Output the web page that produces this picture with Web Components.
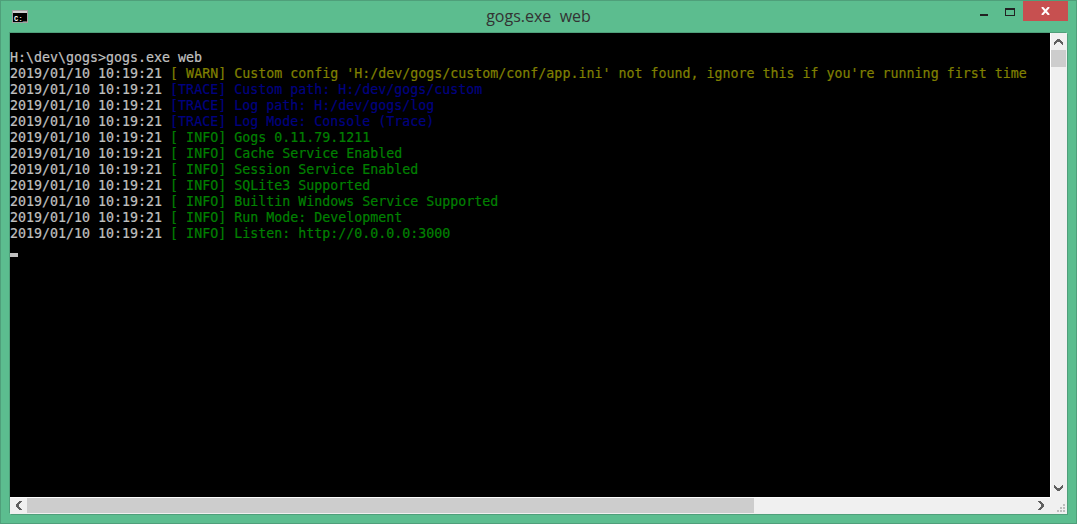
<!DOCTYPE html>
<html><head><meta charset="utf-8">
<style>html,body{margin:0;padding:0;background:#5cbd8f;overflow:hidden}</style></head>
<body>
<console-window title="gogs.exe  web">
<log-line raw>H:\dev\gogs&gt;gogs.exe web</log-line>
<log-line level="warn" tag="[ WARN]">Custom config 'H:/dev/gogs/custom/conf/app.ini' not found, ignore this if you're running first time</log-line>
<log-line level="trace" tag="[TRACE]">Custom path: H:/dev/gogs/custom</log-line>
<log-line level="trace" tag="[TRACE]">Log path: H:/dev/gogs/log</log-line>
<log-line level="trace" tag="[TRACE]">Log Mode: Console (Trace)</log-line>
<log-line level="info" tag="[ INFO]">Gogs 0.11.79.1211</log-line>
<log-line level="info" tag="[ INFO]">Cache Service Enabled</log-line>
<log-line level="info" tag="[ INFO]">Session Service Enabled</log-line>
<log-line level="info" tag="[ INFO]">SQLite3 Supported</log-line>
<log-line level="info" tag="[ INFO]">Builtin Windows Service Supported</log-line>
<log-line level="info" tag="[ INFO]">Run Mode: Development</log-line>
<log-line level="info" tag="[ INFO]">Listen: http://0.0.0.0:3000</log-line>
</console-window>
<script>
class LogLine extends HTMLElement{
  connectedCallback(){
    const s=this.attachShadow({mode:'open'});
    const c={warn:'#808000',trace:'#000080',info:'#008000'}[this.getAttribute('level')];
    const style=`<style>:host{display:block;height:16px;line-height:16px;white-space:pre;color:#c0c0c0;-webkit-text-stroke:.2px currentColor}
      .l{color:${c||'#c0c0c0'}}</style>`;
    if(this.hasAttribute('raw')){s.innerHTML=style+`<slot></slot>`;}
    else s.innerHTML=style+`<span>2019/01/10 10:19:21 </span><span class="l">${this.getAttribute('tag')} <slot></slot></span>`;
  }
}
class ScrollBar extends HTMLElement{
  connectedCallback(){
    const s=this.attachShadow({mode:'open'});
    const v=this.getAttribute('dir')==='v';
    const icon=d=>`<svg width="17" height="17" viewBox="0 0 17 17" shape-rendering="crispEdges"><path d="${d}" fill="#606060"/></svg>`;
    const up=icon('M7 6h3v1h1v1h1v1h1v3h-1v-1h-1v-1h-1v-1h-3v1h-1v1h-1v1h-1v-3h1v-1h1v-1h1z');
    const dn=icon('M4 5v3h1v1h1v1h1v1h3v-1h1v-1h1v-1h1v-3h-1v1h-1v1h-1v1h-3v-1h-1v-1h-1v-1z');
    const lf=icon('M6 7v3h1v1h1v1h1v1h3v-1h-1v-1h-1v-1h-1v-3h1v-1h1v-1h1v-1h-3v1h-1v1h-1v1z');
    const rt=icon('M5 4h3v1h1v1h1v1h1v3h-1v1h-1v1h-1v1h-3v-1h1v-1h1v-1h1v-3h-1v-1h-1v-1h-1z');
    s.innerHTML=`<style>:host{display:flex;flex-direction:${v?'column':'row'};background:#f0f0f0;${v?'width:17px;border-left:1px solid #fff;box-sizing:border-box':'height:17px;border-top:1px solid #fff;box-sizing:border-box'};flex:${v?'0 0 17px':'1'}}
      svg{display:block;flex:none;${v?'margin-left:-1px':'margin-top:-1px'}}
      .t{background:#cdcdcd;${v?'height:17px;margin:0 1px 0 0':'width:var(--w);margin:0 0 1px 0'}}
      .g{flex:1}</style>${v?up:lf}<div class="t"></div><div class="g"></div>${v?dn:rt}`;
  }
}
class ConsoleWindow extends HTMLElement{
  connectedCallback(){
    const s=this.attachShadow({mode:'open'});
    s.innerHTML=`<style>
    :host{display:flex;flex-direction:column;width:1077px;height:524px;box-sizing:border-box;background:#5cbd8f;border:1px solid #4f9f7a;font:13.3px "DejaVu Sans Mono",monospace}
    .bar{height:32px;flex:none;display:flex;align-items:center;position:relative}
    .title{flex:1;text-align:center;font:16px "Open Sans",sans-serif;color:#333;white-space:pre;padding-bottom:2px;box-sizing:border-box}
    .ico{position:absolute;left:11px;top:9px}
    .btns{position:absolute;right:8px;top:0;display:flex}
    .b{height:20px;display:flex;align-items:center;justify-content:center;box-sizing:border-box}
    .x{width:45px;background:#c75050}
    .m{width:26px}
    .main{margin:0 9px;height:481px;display:flex;flex-direction:column;box-shadow:-1px -1px 0 #4f9f7a, 1px 1px 0 #4f9f7a}
    .row{display:flex;flex:1;min-height:0}
    .con{flex:1;background:#000;padding-top:17px;overflow:hidden}
    .cur{height:4px;width:8px;background:#c0c0c0;margin-top:11px}
    .h{display:flex;height:17px;flex:none;--w:727px}
    .grip{width:17px;background:#f0f0f0;border-top:1px solid #f0f0f0;box-sizing:border-box;flex:none}
    .grip svg{display:block}
    </style>
    <div class="bar">
      <svg class="ico" width="16" height="13" viewBox="0 0 16 13"><rect x=".5" y=".5" width="15" height="12" fill="#000" stroke="#a0a0a0"/><rect x="1" y="1" width="14" height="2" fill="#d0d0d0"/><text x="2" y="10.5" font-size="7" font-weight="bold" textLength="13" font-family="Liberation Mono" fill="#fff">C:\_</text></svg>
      <div class="title">${this.getAttribute('title')}</div>
      <div class="btns">
        <div class="b m" style="padding:8px 0 0 0"><svg width="8" height="2"><rect width="8" height="2" fill="#222"/></svg></div>
        <div class="b m" style="padding:2px 0 0 0"><svg width="10" height="8" viewBox="0 0 10 8"><rect x=".5" y=".5" width="9" height="7" fill="none" stroke="#222"/><rect width="10" height="2" fill="#222"/></svg></div>
        <div class="b x"><svg width="9" height="8" viewBox="0 0 9 8"><path d="M1 0L8 8M8 0L1 8" stroke="#fff" stroke-width="2"/></svg></div>
      </div>
    </div>
    <div class="main">
      <div class="row">
        <div class="con"><slot></slot><div class="cur"></div></div>
        <scroll-bar dir="v"></scroll-bar>
      </div>
      <div class="h"><scroll-bar dir="h"></scroll-bar><div class="grip"><svg width="17" height="16" viewBox="0 0 17 16" fill="#bdbdbd" shape-rendering="crispEdges"><rect x="13" y="6" width="2" height="2"/><rect x="10" y="9" width="2" height="2"/><rect x="13" y="9" width="2" height="2"/><rect x="7" y="12" width="2" height="2"/><rect x="10" y="12" width="2" height="2"/><rect x="13" y="12" width="2" height="2"/></svg></div></div>
    </div>`;
  }
}
customElements.define('log-line',LogLine);
customElements.define('scroll-bar',ScrollBar);
customElements.define('console-window',ConsoleWindow);
</script>
</body></html>
